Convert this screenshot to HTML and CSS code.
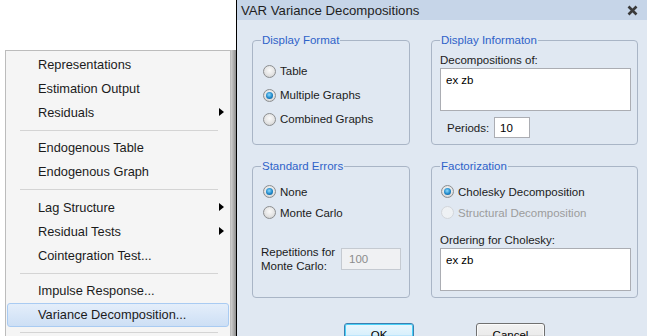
FILE: index.html
```html
<!DOCTYPE html>
<html lang="en">
<head>
    <meta charset="UTF-8">
    <title>VAR Variance Decompositions</title>
    <link rel="stylesheet" href="styles.css">
</head>
<body>
<div class="screen">

    <!-- context menu of the VAR window -->
    <div class="side">
        <div class="menu">
            <div class="item">Representations</div>
            <div class="item">Estimation Output</div>
            <div class="item">Residuals <span class="arrow"></span></div>
            <div class="sep"></div>
            <div class="item">Endogenous Table</div>
            <div class="item">Endogenous Graph</div>
            <div class="sep"></div>
            <div class="item">Lag Structure <span class="arrow"></span></div>
            <div class="item">Residual Tests <span class="arrow"></span></div>
            <div class="item">Cointegration Test...</div>
            <div class="sep"></div>
            <div class="item">Impulse Response...</div>
            <div class="item active">Variance Decomposition...</div>
            <div class="sep"></div>
        </div>
        <div class="under"></div>
    </div>

    <!-- dialog -->
    <div class="dialog">
        <div class="titlebar">
            <span>VAR Variance Decompositions</span>
            <svg class="close" width="11" height="11" viewBox="0 0 11 11">
                <path d="M1.5 1.5 L9.5 9.5 M9.5 1.5 L1.5 9.5" stroke="#3a3a3a" stroke-width="2.6" fill="none"/>
            </svg>
        </div>

        <div class="dlg-body">
            <div class="groups">
                <fieldset class="group fmt">
                    <legend>Display Format</legend>
                    <div class="opt"><span class="radio"></span>Table</div>
                    <div class="opt"><span class="radio on"></span>Multiple Graphs</div>
                    <div class="opt"><span class="radio"></span>Combined Graphs</div>
                </fieldset>

                <fieldset class="group info">
                    <legend>Display Informaton</legend>
                    <div class="label">Decompositions of:</div>
                    <textarea class="box" readonly>ex zb</textarea>
                    <div class="periods">
                        <span class="periods-label">Periods:</span>
                        <input class="field" type="text" value="10">
                    </div>
                </fieldset>

                <fieldset class="group errs">
                    <legend>Standard Errors</legend>
                    <div class="opt small"><span class="radio on"></span>None</div>
                    <div class="opt small"><span class="radio"></span>Monte Carlo</div>
                    <div class="reps">
                        <span class="reps-label">Repetitions for<br>Monte Carlo:</span>
                        <input class="field wide" type="text" value="100" disabled>
                    </div>
                </fieldset>

                <fieldset class="group fact">
                    <legend>Factorization</legend>
                    <div class="opt small"><span class="radio on"></span>Cholesky Decomposition</div>
                    <div class="opt small off"><span class="radio"></span>Structural Decomposition</div>
                    <div class="label order">Ordering for Cholesky:</div>
                    <textarea class="box" readonly>ex zb</textarea>
                </fieldset>
            </div>

            <div class="buttons">
                <button class="btn default">OK</button>
                <button class="btn">Cancel</button>
            </div>
        </div>
    </div>

</div>
</body>
</html>
```

FILE: styles.css
```css
* {
    box-sizing: border-box;
}

body {
    margin: 0;
    width: 647px;
    height: 336px;
    overflow: hidden;
    background-color: #ffffff;
    font-family: "Liberation Sans", Arial, sans-serif;
    color: #1b1b1b;
}

.screen {
    display: flex;
    height: 336px;
}

/* Menu */
.side {
    width: 236px;
    flex-shrink: 0;
    display: flex;
    padding-top: 50px;
}

.menu {
    margin-left: 5px;
    width: 226px;
    height: 300px;
    padding: 1px;
    background-color: #f5f5f5;
    border: 1px solid #bcbcbc;
    border-bottom: none;
    font-size: 12.8px;
}

.item {
    height: 24.2px;
    display: flex;
    align-items: center;
    justify-content: space-between;
    padding: 0 4px 0 30px;
    border: 1px solid transparent;
    border-radius: 3px;
}

.item.active {
    border-color: #a9cbf2;
    background: linear-gradient(#e4eefa, #cddff5);
}

.arrow {
    width: 0;
    height: 0;
    border-left: 5px solid #000;
    border-top: 4px solid transparent;
    border-bottom: 4px solid transparent;
}

.sep {
    height: 1px;
    margin: 5px 11px 5px 13px;
    background-color: #d4d4d4;
}

.under {
    width: 5px;
    background: linear-gradient(90deg, #d0d0d0, #8e8e8e);
}

/* Dialog */
.dialog {
    flex: 1;
    border-left: 1px solid #000;
    background-color: #e0e8f2;
    font-size: 11.5px;
}

.titlebar {
    height: 20px;
    display: flex;
    align-items: center;
    justify-content: space-between;
    padding: 0 9px 0 4px;
    background-color: #c6d5e8;
    font-size: 13.2px;
    color: #1e1e1e;
}

.dlg-body {
    padding: 13px 0 0 15px;
}

.groups {
    display: grid;
    grid-template-columns: 158px 207px;
    grid-template-rows: 112px 139px;
    column-gap: 21px;
    row-gap: 14px;
}

.group {
    margin: 0;
    min-width: 0;
    padding: 0 8px;
    border: 1px solid #a9b5c6;
    border-radius: 4px;
}

.group legend {
    padding: 0 1px;
    line-height: 14px;
    color: #2e62c9;
}

.info,
.fact {
    padding-right: 6px;
}

.fmt {
    padding-top: 12px;
}

.errs,
.fact {
    padding-top: 8px;
}

.info {
    padding-top: 6px;
}

.opt {
    height: 24px;
    display: flex;
    align-items: center;
    gap: 4px;
    padding-left: 2px;
}

.opt.small {
    height: 21px;
}

.fact .opt {
    padding-left: 1px;
}

.opt.off {
    color: #9c9c9c;
}

.radio {
    position: relative;
    width: 13px;
    height: 13px;
    border-radius: 50%;
    border: 1px solid #8c8e90;
    background: radial-gradient(circle at 50% 40%, #fafafa 0, #e4e4e4 55%, #c8c8c8 100%);
}

.radio.on::after {
    content: "";
    position: absolute;
    left: 2px;
    top: 2px;
    width: 7px;
    height: 7px;
    border-radius: 50%;
    background: radial-gradient(circle at 45% 40%, #8fdcff 0, #1d86c8 55%, #0a4c82 100%);
}

.off .radio {
    border-color: #d2d6db;
    background: #eef1f4;
}

.label {
    line-height: 14px;
}

.label.order {
    margin-top: 10px;
}

.box {
    display: block;
    width: 100%;
    height: 43px;
    margin: 1px 0 0;
    padding: 4px 5px;
    border: 1px solid #abadb3;
    background-color: #ffffff;
    font-family: "Liberation Sans", Arial, sans-serif;
    font-size: 11.5px;
    line-height: 14px;
    color: #000;
    resize: none;
    overflow: hidden;
}

.periods {
    display: flex;
    align-items: center;
    margin-top: 6px;
}

.periods-label {
    width: 54px;
    padding-left: 7px;
}

.field {
    width: 36px;
    height: 21px;
    padding: 0 5px;
    border: 1px solid #abadb3;
    background-color: #ffffff;
    font-family: "Liberation Sans", Arial, sans-serif;
    font-size: 11.5px;
    color: #000;
}

.field.wide {
    width: 60px;
    height: 22px;
    padding-left: 7px;
}

.field:disabled {
    border-color: #c5cad1;
    background-color: #f0f1f3;
    color: #8c8c8c;
}

.reps {
    display: flex;
    align-items: center;
    margin-top: 22px;
}

.reps-label {
    width: 83px;
    line-height: 14px;
}

.buttons {
    display: flex;
    gap: 62px;
    margin-top: 25px;
    padding-left: 92px;
}

.btn {
    width: 69px;
    height: 23px;
    padding: 0;
    border: 1px solid #707070;
    border-radius: 3px;
    background: linear-gradient(#f2f2f2, #ebebeb 50%, #dddddd 50%, #cfcfcf);
    box-shadow: inset 0 0 0 1px #fbfbfb;
    font-family: "Liberation Sans", Arial, sans-serif;
    font-size: 11.5px;
    color: #000;
}

.btn.default {
    width: 70px;
    border-color: #3c7fb1;
    background: linear-gradient(#eaf6fd, #d9f0fc 50%, #bee6fd 50%, #a7d9f5);
    box-shadow: inset 0 0 0 1px #48d0f7;
}
```
